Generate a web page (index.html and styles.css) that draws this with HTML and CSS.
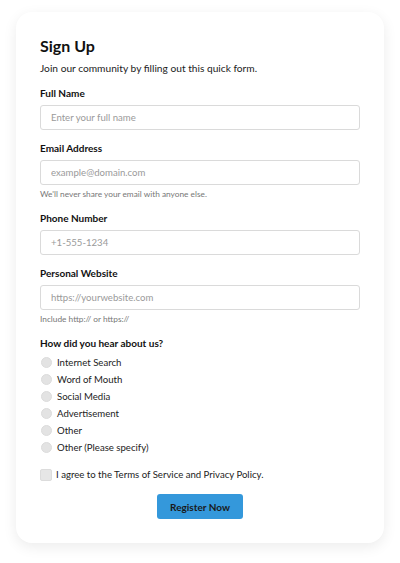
FILE: index.html
```html
<html>

<head>
  <link rel="stylesheet" href="styles.css">
</head>

<body>
  <div class="card">
    <h1>Sign Up</h1>
    <p class="intro">Join our community by filling out this quick form.</p>

    <div class="field">
      <label>Full Name</label>
      <input type="text" placeholder="Enter your full name">
    </div>
    <div class="field">
      <label>Email Address</label>
      <input type="text" placeholder="example@domain.com">
      <small>We'll never share your email with anyone else.</small>
    </div>
    <div class="field">
      <label>Phone Number</label>
      <input type="text" placeholder="+1-555-1234">
    </div>
    <div class="field">
      <label>Personal Website</label>
      <input type="text" placeholder="https://yourwebsite.com">
      <small>Include http:// or https://</small>
    </div>

    <div class="field choices">
      <label>How did you hear about us?</label>
      <div class="options">
        <div class="option"><span class="radio"></span>Internet Search</div>
        <div class="option"><span class="radio"></span>Word of Mouth</div>
        <div class="option"><span class="radio"></span>Social Media</div>
        <div class="option"><span class="radio"></span>Advertisement</div>
        <div class="option"><span class="radio"></span>Other</div>
        <div class="option"><span class="radio"></span>Other (Please specify)</div>
      </div>
    </div>

    <div class="agree"><span class="box"></span>I agree to the Terms of Service and Privacy Policy.</div>

    <div class="actions">
      <button>Register Now</button>
    </div>
  </div>
</body>

</html>
```

FILE: styles.css
```css
body {
  margin: 0;
  background: #fff;
  font-family: Lato, "Noto Sans", sans-serif;
  color: #222;
}

.card {
  margin: 12px 16px;
  padding: 24px;
  background: #fff;
  border-radius: 16px;
  box-shadow: 0 4px 14px rgba(0, 0, 0, 0.08);
}

h1 {
  margin: 0;
  font-size: 16px;
  line-height: 20px;
  font-weight: bold;
  color: #111;
}

.intro {
  margin: 5px 0 11px;
  font-size: 10.2px;
  line-height: 14px;
  color: #222;
}

.field {
  margin-bottom: 11px;
}

.field label {
  display: block;
  font-size: 10px;
  font-weight: bold;
  line-height: 14px;
  margin-bottom: 5px;
  color: #111;
}

.field input {
  display: block;
  width: 100%;
  box-sizing: border-box;
  height: 25px;
  padding: 0 10px;
  border: 1px solid #dadada;
  border-radius: 3px;
  font-family: inherit;
  font-size: 9.6px;
  outline: none;
}

.field input::placeholder {
  color: #9a9a9a;
}

.field small {
  display: block;
  font-size: 8.3px;
  color: #777;
  margin-top: 3px;
  line-height: 12px;
}

.choices {
  margin-bottom: 10px;
}

.choices label {
  margin-bottom: 4px;
}

.option,
.agree {
  display: flex;
  align-items: center;
  font-size: 9.6px;
  line-height: 17px;
  color: #222;
}

.radio {
  width: 11px;
  height: 11px;
  box-sizing: border-box;
  border-radius: 50%;
  background: #e3e3e3;
  border: 1px solid #dcdcdc;
  margin: 0 5px 0 1px;
}

.box {
  width: 12px;
  height: 12px;
  box-sizing: border-box;
  border-radius: 2px;
  background: #e6e6e6;
  border: 1px solid #dcdcdc;
  margin-right: 4px;
}

.actions {
  text-align: center;
  margin-top: 11px;
}

button {
  display: inline-block;
  background: #3498db;
  border: none;
  border-radius: 3px;
  height: 25px;
  width: 86px;
  padding: 0;
  font-family: inherit;
  font-size: 10px;
  font-weight: bold;
  color: #1a1a1a;
  vertical-align: top;
}
```
